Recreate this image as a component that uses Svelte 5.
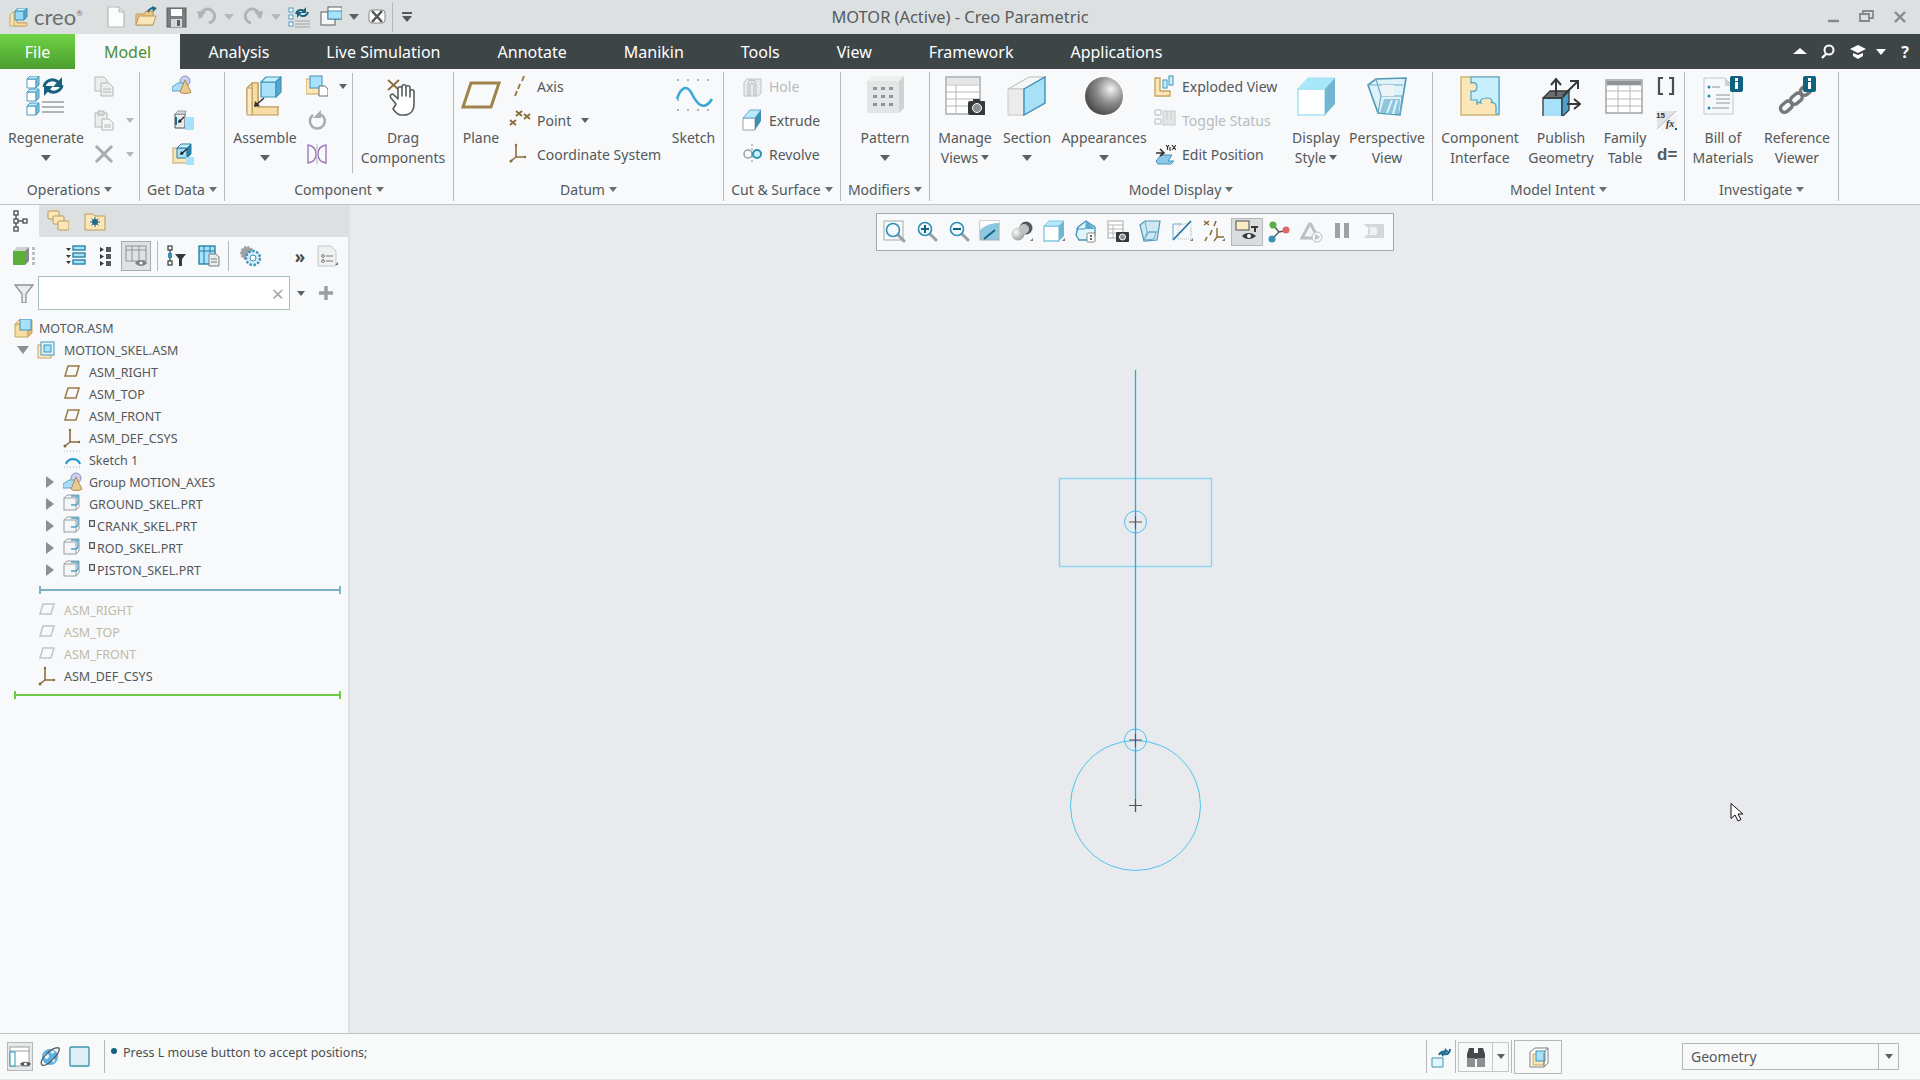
<script>
	// small helpers for the recurring cube shape in the icons
	function cube(x, y, s, f = "#fff", t = "#b8e8fa", r = "#7cc0dc", st = "#4a9cc0", sw = 1) {
		const d = Math.round(s * 0.25);
		const w = s - d;
		const a = `stroke="${st}" stroke-width="${sw}" stroke-linejoin="round"`;
		return `<path d="M${x} ${y + d}h${w}v${w}h${-w}z" fill="${f}" ${a}/><path d="M${x} ${y + d}l${d} ${-d}h${w}l${-d} ${d}z" fill="${t}" ${a}/><path d="M${x + w} ${y + d}l${d} ${-d}v${w}l${-d} ${d}z" fill="${r}" ${a}/>`;
	}
	const badge = (x, y) =>
		`<rect x="${x}" y="${y}" width="13" height="16" rx="2" fill="#10607f"/><rect x="${x + 5}" y="${y + 6}" width="3" height="7" fill="#fff"/><rect x="${x + 5}" y="${y + 2}" width="3" height="3" fill="#fff"/>`;
	const lens = (x, y, inner = "") =>
		`<path d="M${x + 5} ${y + 5}l6 6" stroke="#9aa0a2" stroke-width="3" stroke-linecap="round"/><circle cx="${x}" cy="${y}" r="6.5" fill="#f2fafd" stroke="#2f8fb5" stroke-width="1.6"/>${inner}`;
	const tinyCaret = `<path d="M19 21h3v-3z" fill="#777"/>`;
	const planeS = (c = "#9a7a45") => `<path d="M2 14L5 4h11l-3 10z" fill="none" stroke="${c}" stroke-width="1.5"/>`;
	const csys = `<path d="M7 2v12M7 14h9M7 14l-5 4" stroke="#8a6c3a" stroke-width="1.6" fill="none"/><circle cx="7" cy="2" r="1.2" fill="#8a6c3a"/><circle cx="16" cy="14" r="1.2" fill="#8a6c3a"/><circle cx="2" cy="18" r="1.5" fill="#8a6c3a"/>`;
	const partS = `<rect x="1" y="4" width="12" height="12" fill="#f4f6f7" stroke="#9a9ea0"/><path d="M1 4l3-3h12v12l-3 3M13 4l3-3" fill="none" stroke="#9a9ea0"/><path d="M8 2h7v6a3 3 0 0 1-3 3H8" fill="none" stroke="#45a5d0" stroke-width="1.3"/>`;
	const coneS = `<circle cx="13" cy="6" r="5" fill="#c8cff0" stroke="#8a94c8"/><path d="M0 12l6-4h8l-4 8H0z" fill="#aedcf5" stroke="#5aa5cc"/><path d="M13 5l6 12c-2 2-9 2-11 0z" fill="#e9c98f" stroke="#b08c4c"/>`;

	const icons = {
		// ribbon, large
		regen: `${cube(1, 0, 12)}${cube(1, 13, 12)}${cube(1, 27, 12)}<path d="M18 11a8.5 8.5 0 0 1 14-5" stroke="#17607f" stroke-width="3" fill="none"/><path d="M36 1v10h-9z" fill="#17607f"/><path d="M36 9a8.5 8.5 0 0 1-14 5" stroke="#17607f" stroke-width="3" fill="none"/><path d="M18 20V10h9z" fill="#17607f"/><path d="M16 26h22M16 31h22M16 36h22" stroke="#b0b4b6" stroke-width="2"/>`,
		assemble: `<g transform="translate(-3 0)"><path d="M5 12l5-5h6v24h20l-5 5H5z" fill="#fbe6b8" stroke="#b99a5c" stroke-width="1.2"/><path d="M10 7h6v24h20v8H10z" fill="#f7dca4" stroke="#b99a5c" stroke-width="1.2"/><path d="M5 12h5v27H5z" fill="#fbe9c2" stroke="#b99a5c"/>${cube(19, 1, 20, "#a8e2fa", "#c8f0fc", "#58a8cc", "#3f94b8", 1.2)}<path d="M22 22l-8 7" stroke="#333" stroke-width="1.6"/><path d="M12 31l1-6 5 5z" fill="#333"/></g>`,
		drag: `<path d="M5 4l11 10M16 4L5 14" stroke="#8a6d3b" stroke-width="1.8"/><path d="M13 28l-5-6c-2-3 1-5 3-3l4 4V13c0-3 4-3 4 0v7-9c0-3 4-3 4 0v9-8c0-3 4-3 4 0v9-5c0-3 4-3 4 0v12c0 7-4 11-10 11h-3c-3 0-5-2-8-6z" fill="#fff" stroke="#5a5e60" stroke-width="1.6" stroke-linejoin="round"/>`,
		plane: `<path d="M2 31L10 7h28l-8 24z" fill="none" stroke="#a0844c" stroke-width="3"/>`,
		sketch: `<g fill="#9aa0a2"><circle cx="4" cy="4" r="1"/><circle cx="14" cy="4" r="1"/><circle cx="24" cy="4" r="1"/><circle cx="34" cy="4" r="1"/><circle cx="4" cy="24" r="1"/><circle cx="37" cy="24" r="1"/><circle cx="4" cy="34" r="1"/><circle cx="14" cy="34" r="1"/><circle cx="24" cy="34" r="1"/><circle cx="34" cy="34" r="1"/></g><path d="M3 23C7 11 13 8 18 18s12 18 20 5" fill="none" stroke="#3aa8d8" stroke-width="2.6"/>`,
		pattern: `<g transform="translate(0 -2)"><path d="M2 7l5-5h32v32l-5 5H2z" fill="#e3e5e6"/><path d="M34 7l5-5v32l-5 5z" fill="#cfd2d3"/><path d="M2 7l5-5h32l-5 5z" fill="#eef0f0"/><g fill="#8f9496"><rect x="8" y="13" width="4" height="3"/><rect x="16" y="13" width="4" height="3"/><rect x="24" y="13" width="4" height="3"/><rect x="8" y="21" width="4" height="3"/><rect x="16" y="21" width="4" height="3"/><rect x="24" y="21" width="4" height="3"/><rect x="8" y="29" width="4" height="3"/><rect x="16" y="29" width="4" height="3"/><rect x="24" y="29" width="4" height="3"/></g></g>`,
		manage: `<rect x="1" y="1" width="34" height="37" fill="#fff" stroke="#a4a8aa" stroke-width="1.4"/><path d="M1 9h34M1 16h34M1 23h34M1 30h34M11 9v29" stroke="#b4b8ba"/><path d="M2 2h32v6H2z" fill="#e4e6e7"/><rect x="23" y="25" width="18" height="14" rx="2" fill="#35393b"/><rect x="28" y="23" width="7" height="3" fill="#35393b"/><circle cx="32" cy="32" r="4.5" fill="#8b9092" stroke="#fff"/>`,
		section: `<path d="M1 13L22 1h16L17 13z" fill="#f5f6f6" stroke="#b8bcbe"/><path d="M1 13h16v26H1z" fill="#ececed" stroke="#c4c8ca"/><path d="M17 13L38 1v26L17 39z" fill="#a8e0f8" stroke="#3f8fb4" stroke-width="1.4"/>`,
		sphere: `<defs><radialGradient id="sph" cx="0.68" cy="0.32" r="0.82"><stop offset="0" stop-color="#f4f4f4"/><stop offset="0.45" stop-color="#8c8c8c"/><stop offset="1" stop-color="#3a3a3a"/></radialGradient></defs><circle cx="20" cy="20" r="19" fill="url(#sph)"/>`,
		display: `<path d="M2 13h27v26H2z" fill="#fff" stroke="#a5e0f4" stroke-width="1.5"/><path d="M2 13L12 2h27L29 13z" fill="#a8e8fa" stroke="#a5e0f4"/><path d="M29 13L39 2v26L29 39z" fill="#74b6d2"/>`,
		persp: `<path d="M1 9l8-6 30-1-6 37-22-2z" fill="#dff2f9" stroke="#4f98b8" stroke-width="1.6"/><path d="M9 3l5 17h21M14 20l-3 17M33 39l2-19" fill="none" stroke="#6aabc6" stroke-width="1.2"/><path d="M13 37l4-14h16l-1 15z" fill="#8ec5dc"/><path d="M20 37l5-13M26 38l4-14" stroke="#dff2f9" stroke-width="2"/><path d="M1 9h35" stroke="#6aabc6"/><path d="M15 9h12v11H15z" fill="#eef4f6"/>`,
		iface: `<rect x="1" y="1" width="38" height="38" fill="#fbe6b8" stroke="#c6a561" stroke-width="1.2"/><path d="M11 1h28v37H36V30c0-3-3-4-5-3 2-2 1-5-4-5s-8 2-6 5c-2-1-4-1-4 2v-5h-6v-9c3 1 6 0 6-4s-3-5-6-4z" fill="#c8effc" stroke="#46a5cc" stroke-width="1.2"/>`,
		publish: `${cube(2, 15, 26, "#a8e2fa", "#6a6e70", "#4ea0c8", "#35393b", 1.3)}<path d="M15 20V4M10 9l5-6 5 6M22 20L36 6M29 5h8v8M26 28h12M33 23l6 5-6 5" fill="none" stroke="#35393b" stroke-width="2"/>`,
		family: `<g transform="translate(0 1)"><rect x="1" y="3" width="36" height="33" fill="#fff" stroke="#9ea2a4" stroke-width="1.5"/><path d="M1 8h36M1 14h36M1 22h36M1 29h36M13 8v28M25 8v28" stroke="#b4b8ba"/><path d="M2 4h34v4H2z" fill="#8f9395"/></g>`,
		bom: `<path d="M1 2h21l8 8v28H1z" fill="#f6f9fb" stroke="#c4c8ca"/><path d="M22 2v8h8z" fill="#cbd2d6"/><path d="M9 11h8M13 19h14M13 23h14M9 32h17M13 27h14" stroke="#8f9496"/><circle cx="6" cy="11" r="1.5" fill="#2a86ac"/><circle cx="6" cy="20" r="1.5" fill="#2a86ac"/><circle cx="6" cy="32" r="1.5" fill="#2a86ac"/>${badge(27, 0)}`,
		refview: `<g fill="none" stroke="#75797b" stroke-width="3.4"><rect x="3" y="27" width="13" height="8" rx="4" transform="rotate(-40 9 31)"/><rect x="13" y="19" width="13" height="8" rx="4" transform="rotate(-40 19 23)"/><rect x="23" y="10" width="13" height="8" rx="4" transform="rotate(-40 29 14)"/></g>${badge(26, 0)}`,
		// ribbon, small
		copy: `<g fill="#eceeee" stroke="#b4b8ba"><path d="M2 2h9l3 3v11H2z"/><path d="M8 8h8l4 4v9H8z"/></g><path d="M10 14h8M10 17h8" stroke="#b4b8ba"/>`,
		paste: `<path d="M2 4h12v14H2z" fill="#eceeee" stroke="#b4b8ba"/><path d="M5 2h6v4H5z" fill="#dcdfe0" stroke="#b4b8ba"/><path d="M9 10h7l4 4v7H9z" fill="#f6f7f7" stroke="#b4b8ba"/><path d="M11 16h7M11 18h7" stroke="#b4b8ba"/>`,
		del: `<path d="M3 3l16 16M19 3L3 19" stroke="#a8acae" stroke-width="3"/>`,
		get1: coneS,
		get2: `<path d="M3 5h10v14H3z" fill="#e8eaeb" stroke="#4e5254"/><path d="M3 5l3-3h8l-1 3z" fill="#d8dadb" stroke="#9a9ea0"/><rect x="13" y="8" width="9" height="13" fill="#a8e2fa"/><path d="M12 8l-5 5" stroke="#222" stroke-width="1.3"/><path d="M6 14l1-4 3 3z" fill="#222"/><path d="M3 8h2v8H3z" fill="#1d6a8c"/>`,
		get3: `<rect x="1" y="5" width="14" height="15" fill="#fbe6b8" stroke="#c6a561"/>${cube(5, 1, 14, "#a8e2fa", "#c8f0fc", "#2b7fa4", "#2b7fa4")}<rect x="14" y="14" width="8" height="8" fill="#a8e2fa"/><path d="M15 6l-6 5" stroke="#222" stroke-width="1.3"/><path d="M8 12l1-4 3 3z" fill="#222"/>`,
		comp1: `<rect x="0" y="4" width="15" height="15" fill="#fbe6b8" stroke="#c6a561"/><rect x="4" y="1" width="12" height="12" fill="#a8e2fa" stroke="#3f94b8"/><path d="M13 11h6l3 3v7h-9z" fill="#fff" stroke="#6a6e70"/>`,
		undoCirc: `<path d="M7 6a7.5 7.5 0 1 0 8-.5" fill="none" stroke="#a8acae" stroke-width="2.5"/><path d="M15 1v8h-8z" fill="#a8acae"/>`,
		mirror: `<path d="M2 2c6 1 8 4 8 9s-2 8-8 9zM20 2c-6 1-8 4-8 9s2 8 8 9z" fill="none" stroke="#9a72bc" stroke-width="1.3"/><path d="M11 1v20" stroke="#b8b8b8"/>`,
		axis: `<path d="M15 1l-2 5M11 9l-2 5M8 16l-2 5" stroke="#9a7a45" stroke-width="2"/>`,
		point: `<path d="M7 2l6 5M13 2L7 7M15 5l6 5M21 5l-6 5M1 11l6 5M7 11l-6 5" stroke="#8a6c3a" stroke-width="1.8"/>`,
		csysR: csys,
		hole: `<path d="M3 7l3-3h14v14l-3 3H3z" fill="#e8eaeb" stroke="#c0c4c6"/><path d="M7 21V9a4 4 0 0 1 8 0v12M9 21V10a2 2 0 0 1 4 0v11" fill="none" stroke="#b8bcbe"/>`,
		extrude: `<path d="M2 9h12v12H2z" fill="#fff" stroke="#9ea2a4"/><path d="M2 9l7-8h11l-6 8z" fill="#b8e8fa" stroke="#6aa8c6"/><path d="M14 9l6-8v11l-6 9z" fill="#3f8fb4"/>`,
		revolve: `<path d="M11 1v20" stroke="#8a8e90" stroke-dasharray="2 2"/><circle cx="7" cy="11" r="4" fill="none" stroke="#9aa0a2" stroke-width="1.5"/><circle cx="16" cy="11" r="4" fill="#c8effc" stroke="#2f8fb5" stroke-width="2"/>`,
		exploded: `<path d="M1 3h5v13h10v5H1z" fill="#fbe6b8" stroke="#c6a561" stroke-width="1.4"/><rect x="9" y="5" width="4" height="8" fill="#c8effc" stroke="#3f94b8"/><rect x="15" y="1" width="4" height="9" fill="#c8effc" stroke="#3f94b8"/>`,
		toggle: `<rect x="1" y="1" width="6" height="5" rx="1" fill="none" stroke="#c8cccd" stroke-width="1.4"/><rect x="1" y="10" width="6" height="5" rx="1" fill="none" stroke="#c8cccd" stroke-width="1.4"/><rect x="9" y="2" width="12" height="14" fill="#e2e4e5" stroke="#c8cccd"/><path d="M13 2v9M17 2v9" stroke="#c8cccd"/>`,
		editpos: `<path d="M2 18l5-6h11l-4 6h6l-3 3H4z" fill="#8cc8e8" stroke="#3f94b8"/><path d="M2 10h7M6 6l4 4-4 3" fill="none" stroke="#333" stroke-width="1.6"/><path d="M12 2l1.5 2L15 2M13.5 4v3M16 8v-4M18 2l4 5M22 2l-4 5" stroke="#333" stroke-width="1.2" fill="none"/>`,
		brackets: `<path d="M8 3H4v16h4M14 3h4v16h-4" fill="none" stroke="#4a4e50" stroke-width="2.2"/>`,
		fx: `<path d="M1 2h21L2 20V2z" fill="#e2e4e5"/><path d="M22 4L5 21h17z" fill="#f0f1f2"/><path d="M2 20L21 2" stroke="#b8bcbe"/><text x="1" y="9" font-size="8" font-weight="700" fill="#333" font-family="Liberation Sans">15</text><text x="11" y="18" font-size="10" font-style="italic" font-weight="700" fill="#333" font-family="Liberation Serif">fx</text><rect x="20" y="19" width="2" height="2" fill="#10607f"/>`,
		dEq: `<text x="2" y="17" font-size="17" font-weight="700" fill="#55595b" font-family="Liberation Sans">d=</text>`,
		// graphics toolbar
		refit: `<rect x="1" y="1" width="19" height="19" fill="#f8f9fa" stroke="#a8acae"/>${lens(10, 10)}`,
		zoomIn: `${lens(10, 9, '<path d="M6 9h8M10 5v8" stroke="#17607f" stroke-width="2"/>')}`,
		zoomOut: `${lens(10, 9, '<path d="M6 9h8" stroke="#17607f" stroke-width="2"/>')}`,
		repaint: `<rect x="1" y="1" width="19" height="19" fill="#8cc8e0" stroke="#a8acae"/><path d="M1 10C8 4 14 3 20 3V1H1z" fill="#f4f6f7"/><path d="M2 7c8-4 12-4 18-4v-2H2z" fill="#fff"/><path d="M5 19l11-9" stroke="#16668a" stroke-width="2"/>`,
		appearS: `<defs><radialGradient id="blob" cx="0.35" cy="0.35" r="0.8"><stop offset="0" stop-color="#fafafa"/><stop offset="1" stop-color="#8c9092"/></radialGradient></defs><circle cx="15" cy="8" r="6.5" fill="#55595b"/><circle cx="7" cy="14" r="6.5" fill="url(#blob)"/><circle cx="13" cy="9" r="5" fill="#bfc2c3"/>${tinyCaret}`,
		dispS: `<path d="M1 6h15v15H1z" fill="#fff" stroke="#7cc8e4" stroke-width="1.3"/><path d="M1 6l5-5h15l-5 5z" fill="#b8e8fa" stroke="#7cc8e4"/><path d="M16 6l5-5v15l-5 5z" fill="#74b6d2"/>${tinyCaret}`,
		saved: `<path d="M3 7L11 1l9 6v8l-8 5H4l-3-5z" fill="#e0f4fb" stroke="#3f94b8" stroke-width="1.3"/><path d="M11 1l-1 8h10z" fill="#5aaad0"/><path d="M1 9h9" stroke="#3f94b8"/><rect x="12" y="13" width="8" height="9" rx="1" fill="#fff" stroke="#888"/><rect x="15" y="15" width="2" height="2" fill="#666"/><rect x="15" y="18" width="2" height="2" fill="#666"/>`,
		managS: `<rect x="1" y="1" width="15" height="17" fill="#fff" stroke="#a4a8aa"/><path d="M1 5h15M1 9h15M1 13h15M6 5v13" stroke="#b4b8ba"/><rect x="9" y="12" width="13" height="10" rx="1" fill="#35393b"/><circle cx="15.5" cy="17" r="3" fill="#8b9092" stroke="#fff"/>`,
		perspS: `<path d="M1 5l5-4h15l-3 19-13 1z" fill="#cfe9f4" stroke="#4f98b8" stroke-width="1.2"/><path d="M6 1l2 11h11M8 12l-3 9M5 20l5-8h7l-2 7z" fill="none" stroke="#6aabc6"/>`,
		planeD: `<path d="M7 19V6L20 2v13" fill="none" stroke="#c0c4c6" stroke-dasharray="1 1"/><path d="M7 19h13V8" fill="none" stroke="#c0c4c6" stroke-dasharray="1 1"/><path d="M2 20L20 1" stroke="#2478a0" stroke-width="1.8"/><path d="M2 4h9M2 20V4" stroke="#6aabc6"/>${tinyCaret}`,
		datumD: `<path d="M1 1l5 4M6 1L1 5M13 1l-2 5M9 10l-2 5M4 17l-2 4" stroke="#8a6c3a" stroke-width="1.6"/><path d="M14 8v9h7M14 17l-3 4" stroke="#8a6c3a" stroke-width="1.4" fill="none"/>${tinyCaret}`,
		layer: `<rect x="1" y="1" width="13" height="9" fill="#fbecc8" stroke="#4a4e50"/><path d="M16 6h7v2h-2v4h-2v-4h-3z" fill="#35393b"/><path d="M7 16c3-4 10-4 14 0-4 4-11 4-14 0z" fill="#35393b"/><circle cx="14" cy="16" r="2" fill="#fff"/>`,
		node: `<path d="M7 6l5 6-6 6M12 12l9-2" stroke="#555" stroke-width="1.4" fill="none"/><circle cx="6" cy="5" r="3.5" fill="#5cb048"/><circle cx="19" cy="10" r="3.5" fill="#e0686a"/><circle cx="5" cy="19" r="3.5" fill="#3f8fb4"/>`,
		triPlay: `<path d="M11 3L3 18h14" fill="none" stroke="#bcc0c2" stroke-width="3"/><path d="M11 3l6 11" stroke="#bcc0c2" stroke-width="3"/><path d="M11 8l-3 7h6z" fill="#f0f1f2"/><circle cx="18" cy="17" r="5" fill="#f4f6f7" stroke="#bcc0c2"/><path d="M16 14l5 3-5 3z" fill="#bcc0c2"/>`,
		pause: `<rect x="4" y="3" width="5" height="15" fill="#9ea2a4"/><rect x="13" y="3" width="5" height="15" fill="#9ea2a4"/>`,
		ghost: `<path d="M1 4h20v14H1l4-4V8z" fill="#d4d6d7"/><path d="M6 7h7c2 3 2 5 0 8H6c2-3 2-5 0-8z" fill="#f0f1f2"/>`,
		// quick access
		logo: `<path d="M1 7l3-3h4v11h10l-3 3H1z" fill="#fbe6b8" stroke="#c6a561"/><path d="M5 4h3v11h10v3H5z" fill="#f7dca4" stroke="#c6a561"/>${cube(6, 0, 12, "#94d8f6", "#c8f0fc", "#58a8cc", "#3f94b8")}`,
		fileNew: `<path d="M3 1h11l5 5v15H3z" fill="#fcfdfd" stroke="#b4b8ba" stroke-width="1.2"/><path d="M14 1v5h5" fill="#dfe3e5" stroke="#b4b8ba"/>`,
		open: `<path d="M1 8h8l2-3h7v14H1z" fill="#e9c67f" stroke="#b99a5c"/><path d="M1 19l3-9h17l-3 9z" fill="#fbe6b8" stroke="#b99a5c"/><path d="M13 6c1-3 3-4 6-4" stroke="#1d6a8c" stroke-width="2" fill="none"/><path d="M17 0l5 2-4 4z" fill="#1d6a8c"/>`,
		save: `<rect x="1" y="2" width="19" height="19" fill="#7a7e80" stroke="#5a5e60"/><rect x="5" y="3" width="11" height="7" fill="#fff"/><rect x="5" y="13" width="11" height="8" fill="#d4d6d7"/><rect x="11" y="14" width="3" height="6" fill="#5a5e60"/>`,
		undo: `<path d="M5 13a7 7 0 1 1 8 5" fill="none" stroke="#b0b4b6" stroke-width="3" transform="translate(0 -1)"/><path d="M1 5l9 1-7 7z" fill="#b0b4b6"/>`,
		redo: `<path d="M17 13a7 7 0 1 0-8 5" fill="none" stroke="#b0b4b6" stroke-width="3" transform="translate(0 -1)"/><path d="M21 5l-9 1 7 7z" fill="#b0b4b6"/>`,
		regenS: `<g fill="#fff" stroke="#4a9cc0"><rect x="1" y="2" width="4" height="4"/><rect x="1" y="9" width="4" height="4"/><rect x="1" y="16" width="4" height="4"/></g><path d="M8 8c1-4 5-5 8-3M20 6c-1 4-5 5-8 3" stroke="#17607f" stroke-width="2" fill="none"/><path d="M18 1v6h-5zM9 12V6h5z" fill="#17607f"/><path d="M7 15h15M7 18h15M7 21h15" stroke="#9ea2a4"/>`,
		windows: `<rect x="1" y="6" width="14" height="13" fill="#f6f7f7" stroke="#5a5e60"/><rect x="8" y="1" width="14" height="12" fill="#fff" stroke="#5a5e60"/><rect x="8" y="5" width="14" height="8" fill="#a8e2fa" stroke="#3f94b8"/>`,
		closeW: `<rect x="3" y="4" width="16" height="13" rx="3" fill="#fff" stroke="#888"/><path d="M6 5l10 11M16 5L6 16" stroke="#55595b" stroke-width="2.6"/>`,
		// navigation panel
		treeTab: `<g fill="none" stroke="#55595b" stroke-width="1.4" transform="translate(4 0)"><rect x="1" y="1" width="4" height="4"/><rect x="1" y="9" width="4" height="4"/><rect x="1" y="17" width="4" height="4"/><rect x="10" y="9" width="4" height="4"/><path d="M3 5v4M3 13v4M5 11h5"/></g>`,
		folders: `<g fill="#fbe6b8" stroke="#b99a5c"><rect x="1" y="1" width="11" height="8" rx="1"/><rect x="6" y="6" width="11" height="8" rx="1"/><rect x="11" y="11" width="11" height="9" rx="1"/></g>`,
		favFolder: `<path d="M1 4h8l2 2h10v14H1z" fill="#fbe6b8" stroke="#b99a5c"/><circle cx="11" cy="12" r="3" fill="#1d6a8c"/><path d="M11 7v10M6 12h10M7.5 8.5l7 7M14.5 8.5l-7 7" stroke="#1d6a8c"/>`,
		greenCube: `<path d="M1 6h12v14H1z" fill="#5cb038"/><path d="M1 6l4-4h12l-4 4z" fill="#cfd2d3"/><path d="M13 6l4-4v14l-4 4z" fill="#85898b"/>`,
		dots: `<g fill="#bcc0c2"><rect x="2" y="2" width="3" height="3"/><rect x="2" y="7" width="3" height="3"/><rect x="2" y="12" width="3" height="3"/><rect x="2" y="17" width="3" height="3"/></g>`,
		listExp: `<path d="M1 3h5l-2.5 3zM1 10h5l-2.5 3zM1 16h5l-2.5 3z" fill="#35393b"/><g fill="#a8e2fa" stroke="#1d7aa0" stroke-width="1.3"><rect x="8" y="1" width="12" height="4"/><rect x="8" y="8" width="12" height="4"/><rect x="8" y="15" width="12" height="4"/></g>`,
		listCol: `<g transform="translate(4 0)"><path d="M1 2l4 2.5L1 7zM1 9l4 2.5L1 14zM1 16l4 2.5L1 21z" fill="#35393b"/><g fill="#55595b"><rect x="7" y="2" width="5" height="5"/><rect x="7" y="9" width="5" height="5"/><rect x="7" y="16" width="5" height="5"/></g></g>`,
		cols: `<g fill="#dfe1e2" stroke="#8f9496"><rect x="1" y="1" width="20" height="15"/><path d="M7 1v15M14 1v15M1 5h20" fill="none"/></g><path d="M10 18c3-4 9-4 12 0-3 4-9 4-12 0z" fill="#7e8284"/><circle cx="16" cy="18" r="1.5" fill="#fff"/>`,
		treeFilter: `<g fill="none" stroke="#35393b" stroke-width="1.2"><rect x="1" y="1" width="4" height="4"/><rect x="1" y="16" width="4" height="4"/><path d="M3 5v3M3 13v3"/></g><rect x="1" y="8" width="4" height="5" fill="#3f8fb4"/><path d="M8 9h11l-4 5v7h-3v-7z" fill="#35393b"/>`,
		colsDoc: `<rect x="1" y="1" width="16" height="18" fill="#a8e2fa" stroke="#1d7aa0" stroke-width="1.3"/><path d="M6 1v18M12 1v7M1 6h16" stroke="#1d7aa0"/><path d="M11 9h7l3 3v9H11z" fill="#e8eaeb" stroke="#7a7e80"/><path d="M13 14h6M13 17h6" stroke="#7a7e80"/>`,
		gears: `<circle cx="8" cy="8" r="6" fill="#9ea2a4" stroke="#9ea2a4" stroke-width="2" stroke-dasharray="2 1.5"/><circle cx="14" cy="13" r="7" fill="#d8eefa" stroke="#3f94b8" stroke-width="2.4" stroke-dasharray="2.5 1.5"/><circle cx="14" cy="13" r="3" fill="#fff" stroke="#2f8fb5"/>`,
		doc: `<path d="M2 1h13l5 5v15H2z" fill="#eef0f1" stroke="#c4c8ca"/><circle cx="7" cy="11" r="1.4" fill="none" stroke="#777"/><circle cx="7" cy="16" r="1.4" fill="none" stroke="#777"/><path d="M10 11h7M10 16h7" stroke="#777"/><path d="M19 20l3-3v3z" fill="#777"/>`,
		funnel: `<path d="M1 2h18l-7 9v9H8v-9z" fill="#e8eaeb" stroke="#8f9496" stroke-width="1.3"/>`,
		plus: `<path d="M8 1v14M1 8h14" stroke="#9a9ea0" stroke-width="3.4"/>`,
		// tree
		asmTop: `${cube(1, 1, 17, "#f7dca4", "#fbe6b8", "#e0bd78", "#c6a561")}<rect x="6" y="0" width="11" height="11" fill="#a8e2fa" stroke="#3f94b8"/>`,
		asmSk: `<rect x="1" y="4" width="13" height="13" fill="#fbecc8" stroke="#c6a561"/><rect x="4" y="1" width="13" height="13" fill="#e4f6fc" stroke="#3f94b8"/><rect x="7" y="4" width="7" height="7" fill="#a8e2fa" stroke="#3f94b8"/>`,
		planeT: planeS(),
		planeG: planeS("#c2c5c6"),
		csys,
		sketchT: `<path d="M3 14a7.5 7.5 0 0 1 14 0" fill="none" stroke="#2f9bcd" stroke-width="2.2"/><path d="M1 1h17M1 17h17" stroke="#a8acae" stroke-dasharray="1 2"/>`,
		group: coneS,
		part: partS,
		// status bar
		sbPanels: `<rect x="1" y="1" width="19" height="19" fill="#fff" stroke="#9a9ea0"/><path d="M1 5h19" stroke="#9a9ea0"/><rect x="1" y="6" width="5" height="14" fill="#fff" stroke="#2f8fb5"/><path d="M11 18c2-3 9-3 11 0-2 3-9 3-11 0z" fill="#55595b"/><circle cx="16.5" cy="18" r="1.5" fill="#fff"/>`,
		sbWeb: `<circle cx="11" cy="11" r="8" fill="#5cb0e4"/><path d="M5 9c3-3 6 0 5 2s-3 3-4 1zM13 13c3-1 4 1 2 3-2 1-3-1-2-3zM11 4c3 0 5 1 4 3-2 1-4 0-4-3z" fill="#eaf6fc"/><path d="M3 19C-1 14 14 0 20 2c2 4-12 20-17 17z" fill="none" stroke="#55595b" stroke-width="1.3"/>`,
		sbBox: `<rect x="1" y="1" width="19" height="19" rx="1" fill="#e3edf4" stroke="#3f94b8" stroke-width="1.4"/>`,
		sbSync: `<path d="M2 12h11v9H2z" fill="#e4f6fc" stroke="#3f94b8"/><path d="M9 9c1-3 4-4 7-3M20 3c0 4-3 6-6 5" stroke="#1d6a8c" stroke-width="2" fill="none"/><path d="M15 2l4 4-5 1zM13 11l-3-4 5-1z" fill="#1d6a8c"/>`,
		binoc: `<path d="M2 8l2-6h5v5h4V2h5l2 6v13h-8v-8H10v8H2z" fill="#45494b"/><path d="M2 12h8v9H2zM12 12h8v9h-8z" fill="#8c9092"/>`,
		sbCube: `<path d="M3 6l5-4h13v15l-4 4H3z" fill="#fff" stroke="#7a7e80"/><rect x="6" y="8" width="11" height="11" fill="#fbe6b8" stroke="#c6a561"/><rect x="9" y="5" width="9" height="10" fill="#a8e2fa" stroke="#3f94b8"/><path d="M17 6l4-4M17 21V7" stroke="#7a7e80"/>`,
	};

	const big = (w, label, icon, caret = "") => ({ type: "big", w, label, icon, caret });
	const col = (w, pl, rows) => ({ type: "col", w, pl, rows });
	const r = (icon, text = "", extra = {}) => ({ icon, text, ...extra });

	const groups = [
		{
			name: "Operations",
			w: 140,
			items: [
				big(92, ["Regenerate"], "regen", "below"),
				col(47, 1, [r("copy"), r("paste", "", { drop: true }), r("del", "", { drop: true })]),
			],
		},
		{ name: "Get Data", w: 85, items: [col(84, 32, [r("get1"), r("get2"), r("get3")])] },
		{
			name: "Component",
			w: 229,
			items: [
				big(80, ["Assemble"], "assemble", "below"),
				col(47, 1, [r("comp1", "", { drop: true }), r("undoCirc"), r("mirror")]),
				{ type: "sep" },
				big(100, ["Drag", "Components"], "drag"),
			],
		},
		{
			name: "Datum",
			w: 270,
			items: [
				big(54, ["Plane"], "plane"),
				col(156, 1, [r("axis", "Axis"), r("point", "Point", { drop: true }), r("csysR", "Coordinate System")]),
				big(59, ["Sketch"], "sketch"),
			],
		},
		{
			name: "Cut & Surface",
			w: 117,
			items: [col(116, 17, [r("hole", "Hole", { off: true }), r("extrude", "Extrude"), r("revolve", "Revolve")])],
		},
		{ name: "Modifiers", w: 89, items: [big(88, ["Pattern"], "pattern", "below")] },
		{
			name: "Model Display",
			w: 503,
			items: [
				big(70, ["Manage", "Views"], "manage", "inline"),
				big(54, ["Section"], "section", "below"),
				big(100, ["Appearances"], "sphere", "below"),
				col(129, 0, [r("exploded", "Exploded View"), r("toggle", "Toggle Status", { off: true }), r("editpos", "Edit Position")]),
				big(66, ["Display", "Style"], "display", "inline"),
				big(76, ["Perspective", "View"], "persp"),
			],
		},
		{
			name: "Model Intent",
			w: 252,
			items: [
				big(94, ["Component", "Interface"], "iface"),
				big(68, ["Publish", "Geometry"], "publish"),
				big(60, ["Family", "Table"], "family"),
				col(29, 0, [r("brackets"), r("fx"), r("dEq")]),
			],
		},
		{
			name: "Investigate",
			w: 154,
			items: [big(76, ["Bill of", "Materials"], "bom"), big(72, ["Reference", "Viewer"], "refview")],
		},
	];

	const tabs = ["Analysis", "Live Simulation", "Annotate", "Manikin", "Tools", "View", "Framework", "Applications"];

	const qat = [
		{ w: 30, icon: "fileNew" },
		{ w: 30, icon: "open" },
		{ w: 31, icon: "save" },
		{ w: 30, icon: "undo" },
		{ w: 14, caret: true },
		{ w: 34, icon: "redo" },
		{ w: 12, caret: true },
		{ w: 34, icon: "regenS" },
		{ w: 30, icon: "windows" },
		{ w: 16, caret: true, dark: true },
		{ w: 30, icon: "closeW" },
		{ w: 1, line: true },
		{ w: 28, customize: true },
	];

	const navTools = [
		{ w: 22, icon: "greenCube" },
		{ w: 14, icon: "dots" },
		{ w: 14 },
		{ w: 28, icon: "listExp" },
		{ w: 31, icon: "listCol" },
		{ w: 30, icon: "cols", on: true },
		{ w: 12, line: true },
		{ w: 30, icon: "treeFilter" },
		{ w: 31, icon: "colsDoc" },
		{ w: 9, line: true },
		{ w: 33, icon: "gears" },
		{ w: 22 },
		{ w: 24, more: true },
		{ w: 29, icon: "doc" },
	];

	const viewTools = [
		"refit", "zoomIn", "zoomOut", "repaint", "appearS", "dispS", "saved", "managS",
		"perspS", "planeD", "datumD", "layer", "node", "triPlay", "pause", "ghost",
	];

	const tree = [
		{ icon: "planeT", text: "ASM_RIGHT" },
		{ icon: "planeT", text: "ASM_TOP" },
		{ icon: "planeT", text: "ASM_FRONT" },
		{ icon: "csys", text: "ASM_DEF_CSYS" },
		{ icon: "sketchT", text: "Sketch 1" },
		{ icon: "group", text: "Group MOTION_AXES", exp: true },
		{ icon: "part", text: "GROUND_SKEL.PRT", exp: true },
		{ icon: "part", text: "CRANK_SKEL.PRT", exp: true, snap: true },
		{ icon: "part", text: "ROD_SKEL.PRT", exp: true, snap: true },
		{ icon: "part", text: "PISTON_SKEL.PRT", exp: true, snap: true },
	];
	const insert = [
		{ icon: "planeG", text: "ASM_RIGHT", off: true },
		{ icon: "planeG", text: "ASM_TOP", off: true },
		{ icon: "planeG", text: "ASM_FRONT", off: true },
		{ icon: "csys", text: "ASM_DEF_CSYS" },
	];
</script>

{#snippet ico(name, size)}
	<svg class="ico" width={size} height={size} viewBox="0 0 {size} {size}">{@html icons[name]}</svg>
{/snippet}

<div class="app">
	<header class="titlebar">
		<div class="qat">
			{@render ico("logo", 19)}
			<span class="creo">creo<sup>®</sup></span>
			<div class="qat-tools">
				{#each qat as q}
					<span class="slot" style:width="{q.w}px">
						{#if q.icon}{@render ico(q.icon, 22)}{/if}
						{#if q.caret}<i class="caret" class:pale={!q.dark}></i>{/if}
						{#if q.line}<i class="qat-line"></i>{/if}
						{#if q.customize}<i class="customize"></i>{/if}
					</span>
				{/each}
			</div>
		</div>
		<div class="title">MOTOR (Active) - Creo Parametric</div>
		<div class="winbtns">
			<svg width="33" height="22" viewBox="0 0 33 22"><path d="M11 15h11" stroke="#85898b" stroke-width="2.4" /></svg>
			<svg width="33" height="22" viewBox="0 0 33 22"><path d="M13 8V5h10v7h-4M10 8h9v7h-9z" fill="none" stroke="#85898b" stroke-width="1.8" /></svg>
			<svg width="33" height="22" viewBox="0 0 33 22"><path d="M12 6l10 10M22 6L12 16" stroke="#85898b" stroke-width="2.4" /></svg>
		</div>
	</header>

	<nav class="tabs">
		<button class="tab file">File</button>
		<button class="tab active">Model</button>
		{#each tabs as t}
			<button class="tab">{t}</button>
		{/each}
		<div class="tabs-right">
			<svg width="28" height="22" viewBox="0 0 28 22"><path d="M7 13l7-6 7 6z" fill="#fff" /></svg>
			<svg width="28" height="22" viewBox="0 0 28 22"><circle cx="15" cy="9" r="4.5" fill="none" stroke="#fff" stroke-width="2" /><path d="M12 13l-4 4" stroke="#fff" stroke-width="2.4" /></svg>
			<svg class="cap" width="28" height="22" viewBox="0 0 28 22"><path d="M14 4l8 4-8 4-8-4zM9 12l5 2 5-2v3l-5 3-5-3z" fill="#fff" /></svg>
			<span class="slot w18"><i class="caret white"></i></span>
			<span class="help">?</span>
		</div>
	</nav>

	<section class="ribbon">
		{#each groups as g}
			<div class="group" style:width="{g.w}px">
				<div class="group-body">
					{#each g.items as it}
						{#if it.type === "big"}
							<div class="big" style:width="{it.w}px">
								{@render ico(it.icon, 40)}
								<div class="big-label">
									{#each it.label as line, i}
										<div class="line">
											{line}{#if it.caret === "inline" && i === it.label.length - 1}<i class="caret inline"></i>{/if}
										</div>
									{/each}
									{#if it.caret === "below"}
										<div class="line below"><i class="caret"></i></div>
									{/if}
								</div>
							</div>
						{:else if it.type === "col"}
							<div class="col" style:width="{it.w}px" style:padding-left="{it.pl}px">
								{#each it.rows as row}
									<div class="row" class:off={row.off}>
										{@render ico(row.icon, 22)}
										{#if row.text}<span>{row.text}</span>{/if}
										{#if row.drop}<i class="caret" class:pale={!row.text && row.icon !== "comp1"} class:point={row.text}></i>{/if}
									</div>
								{/each}
							</div>
						{:else}
							<div class="vsep"></div>
						{/if}
					{/each}
				</div>
				<div class="group-name">{g.name}<i class="caret small"></i></div>
			</div>
		{/each}
	</section>

	<div class="workspace">
		<aside class="nav">
			<div class="nav-tabs">
				<span class="nav-tab on">{@render ico("treeTab", 22)}</span>
				<span class="nav-tab">{@render ico("folders", 22)}</span>
				<span class="nav-tab">{@render ico("favFolder", 22)}</span>
			</div>
			<div class="nav-tools">
				{#each navTools as n}
					<span class="slot" class:on={n.on} style:width="{n.w}px">
						{#if n.icon}{@render ico(n.icon, 22)}{/if}
						{#if n.line}<i class="tool-line"></i>{/if}
						{#if n.more}<b class="more">»</b>{/if}
					</span>
				{/each}
			</div>
			<div class="search">
				<span class="funnel">{@render ico("funnel", 20)}</span>
				<div class="search-box"><span class="clear">×</span></div>
				<i class="caret"></i>
				<span class="plus">{@render ico("plus", 16)}</span>
			</div>
			<div class="tree">
				<div class="node lv0">
					<span class="node-ico">{@render ico("asmTop", 19)}</span>MOTOR.ASM
				</div>
				<div class="node lv1">
					<span class="exp"><i class="tri down"></i></span>
					<span class="node-ico">{@render ico("asmSk", 18)}</span>MOTION_SKEL.ASM
				</div>
				{#each tree as n}
					<div class="node lv2">
						<span class="exp">{#if n.exp}<i class="tri"></i>{/if}</span>
						<span class="node-ico">{@render ico(n.icon, 20)}</span>
						{#if n.snap}<i class="snap"></i>{/if}{n.text}
					</div>
				{/each}
				<div class="insert blue"></div>
				{#each insert as n}
					<div class="node lv3" class:off={n.off}>
						<span class="node-ico">{@render ico(n.icon, 20)}</span>{n.text}
					</div>
				{/each}
				<div class="insert green"></div>
			</div>
		</aside>

		<main class="graphics">
			<div class="view-tools">
				{#each viewTools as v}
					<span class="vt" class:on={v === "layer"}>{@render ico(v, 24)}</span>
				{/each}
			</div>
			<svg class="sketch" width="1570" height="828" viewBox="350 205 1570 828">
				<g fill="none" stroke="#4cc4f0">
					<rect x="1059.5" y="478.5" width="152" height="88" stroke="#8cd4f0" stroke-width="1.4" />
					<circle cx="1135.5" cy="522" r="11" />
					<circle cx="1135.5" cy="740" r="11" />
					<circle cx="1135.5" cy="805.5" r="65" />
					<path d="M1135.5 370V812" stroke="#18b0e4" stroke-width="1.3" />
				</g>
				<path d="M1129 522h13M1135.5 516v13M1129 740h13M1135.5 734v13M1129 805.5h13M1135.5 799v13" stroke="#704848" stroke-width="1.1" />
				<path d="M1731 803.5v15l4-3.5 3 6 3-1.5-3-5.5h5z" fill="#fff" stroke="#111" />
			</svg>
		</main>
	</div>

	<footer class="status">
		<span class="sb-btn on">{@render ico("sbPanels", 22)}</span>
		<span class="sb-btn">{@render ico("sbWeb", 22)}</span>
		<span class="sb-btn">{@render ico("sbBox", 22)}</span>
		<i class="sb-line first"></i>
		<div class="msg"><i class="bullet"></i>Press L mouse button to accept positions;</div>
		<div class="sb-right">
			<i class="sb-line"></i>
			<span class="sb-sync">{@render ico("sbSync", 22)}</span>
			<i class="sb-line"></i>
			<div class="finder"><span>{@render ico("binoc", 22)}</span><span class="finder-drop"><i class="caret"></i></span></div>
			<i class="sb-line"></i>
			<div class="cube-btn">{@render ico("sbCube", 22)}</div>
			<div class="select"><span>Geometry</span><span class="select-drop"><i class="caret"></i></span></div>
		</div>
	</footer>
</div>

<style>
	:global(body) {
		margin: 0;
		background: #f7f9fb;
	}

	.app {
		width: 1920px;
		height: 1080px;
		display: flex;
		flex-direction: column;
		overflow: hidden;
		font-family: "Noto Sans", "Open Sans", sans-serif;
		font-size: 14px;
		color: #53585a;
	}

	.ico {
		display: block;
		flex: none;
	}

	.slot {
		display: flex;
		align-items: center;
		justify-content: center;
		flex: none;
		height: 100%;
	}

	.caret {
		display: inline-block;
		width: 0;
		height: 0;
		border-left: 5px solid transparent;
		border-right: 5px solid transparent;
		border-top: 6px solid #5c6163;
		flex: none;
	}
	.caret.pale {
		border-top-color: #b4b8ba;
	}
	.caret.white {
		border-top-color: #fff;
	}
	.caret.small {
		border-left-width: 4px;
		border-right-width: 4px;
		border-top-width: 5px;
		margin-left: 4px;
		vertical-align: 3px;
		border-top-color: #6a6f71;
	}
	.caret.inline {
		border-left-width: 4px;
		border-right-width: 4px;
		border-top-width: 5px;
		margin-left: 3px;
		vertical-align: 3px;
	}

	/* title bar */
	.titlebar {
		height: 34px;
		flex: none;
		background: #dce0e0;
		display: grid;
		grid-template-columns: 1fr auto 1fr;
		align-items: center;
	}
	.qat {
		display: flex;
		align-items: center;
		height: 34px;
		padding-left: 9px;
	}
	.creo {
		margin-left: 6px;
		width: 67px;
		font-family: Lato, sans-serif;
		font-size: 22px;
		line-height: 34px;
		color: #6a6f71;
	}
	.creo sup {
		font-size: 8px;
		vertical-align: 9px;
		line-height: 0;
	}
	.qat-tools {
		display: flex;
		height: 34px;
	}
	.qat-line {
		display: block;
		width: 1px;
		height: 30px;
		background: #b4b8ba;
	}
	.customize {
		display: block;
		width: 10px;
		height: 8px;
		border-top: 2px solid #55595b;
		position: relative;
	}
	.customize::after {
		content: "";
		position: absolute;
		top: 2px;
		left: 0;
		border-left: 5px solid transparent;
		border-right: 5px solid transparent;
		border-top: 6px solid #55595b;
	}
	.title {
		font-size: 16.4px;
		color: #565b5d;
		line-height: 34px;
		white-space: nowrap;
	}
	.winbtns {
		display: flex;
		justify-content: flex-end;
		padding-right: 4px;
	}

	/* tabs */
	.tabs {
		height: 35px;
		flex: none;
		background: #3d4547;
		display: flex;
	}
	.tab {
		border: 0;
		background: none;
		padding: 1px 28.5px 0;
		font: inherit;
		font-size: 16px;
		color: #fff;
		line-height: 34px;
	}
	.tab.file {
		width: 75px;
		padding: 1px 0 0;
		background: linear-gradient(#6fd444, #4b9d2f);
	}
	.tab.active {
		width: 105px;
		padding: 1px 0 0;
		background: #f7f9fb;
		color: #4b8f34;
	}
	.tabs-right {
		margin-left: auto;
		display: flex;
		align-items: center;
		padding-right: 2px;
	}
	.cap {
		margin-left: 2px;
	}
	.w18 {
		width: 18px;
	}
	.help {
		width: 26px;
		text-align: center;
		font-weight: 700;
		color: #fff;
		font-size: 16px;
		margin-left: 2px;
	}

	/* ribbon */
	.ribbon {
		height: 136px;
		flex: none;
		box-sizing: border-box;
		background: #f7f9fb;
		border-bottom: 1px solid #bfc3c4;
		display: flex;
		padding-top: 3px;
	}
	.group {
		height: 129px;
		box-sizing: border-box;
		border-right: 1px solid #b4b9ba;
		display: flex;
		flex-direction: column;
		flex: none;
	}
	.group-body {
		flex: 1;
		display: flex;
		padding-top: 4px;
		min-height: 0;
	}
	.group-name {
		height: 20px;
		line-height: 20px;
		text-align: center;
		margin-bottom: 1px;
		white-space: nowrap;
	}
	.big {
		display: flex;
		flex-direction: column;
		align-items: center;
		flex: none;
	}
	.big-label {
		margin-top: 12px;
		text-align: center;
		white-space: nowrap;
	}
	.line {
		height: 20px;
		line-height: 20px;
	}
	.line.below {
		margin-top: -2px;
	}
	.col {
		box-sizing: border-box;
		flex: none;
		margin-top: -7px;
	}
	.row {
		height: 34px;
		display: flex;
		align-items: center;
		gap: 6px;
		white-space: nowrap;
	}
	.row.off {
		color: #b8bcbe;
	}
	.row .caret {
		margin-left: 5px;
		border-left-width: 4px;
		border-right-width: 4px;
		border-top-width: 5px;
	}
	.row .caret.point {
		margin-left: 4px;
	}
	.vsep {
		width: 1px;
		height: 100px;
		margin-top: -3px;
		background: #b4b9ba;
		flex: none;
	}

	/* workspace */
	.workspace {
		flex: 1;
		display: flex;
		min-height: 0;
	}
	.nav {
		width: 348px;
		flex: none;
		background: #f7f9fb;
		border-right: 2px solid #dfe2e5;
	}
	.nav-tabs {
		height: 32px;
		display: flex;
		background: #dce0e0;
	}
	.nav-tab {
		width: 37px;
		display: flex;
		align-items: center;
		justify-content: center;
	}
	.nav-tab.on {
		width: 39px;
		background: #f7f9fb;
	}
	.nav-tools {
		height: 38px;
		display: flex;
		padding-left: 12px;
		align-items: center;
	}
	.nav-tools .slot {
		height: 30px;
	}
	.nav-tools .slot.on {
		box-sizing: border-box;
		background: #dfe1e2;
		border: 1px solid #a8acae;
	}
	.tool-line {
		display: block;
		width: 1px;
		height: 30px;
		background: #b4b8ba;
	}
	.more {
		color: #45494b;
		font-size: 17px;
		line-height: 1;
	}
	.search {
		height: 34px;
		margin-top: 1px;
		display: flex;
		align-items: center;
	}
	.funnel {
		width: 38px;
		padding-left: 14px;
		box-sizing: border-box;
	}
	.search-box {
		width: 252px;
		height: 34px;
		box-sizing: border-box;
		border: 1px solid #a9bcc0;
		background: #fff;
		display: flex;
		align-items: center;
		justify-content: flex-end;
		padding-right: 5px;
	}
	.clear {
		color: #a8acae;
		font-size: 22px;
		line-height: 1;
	}
	.search .caret {
		margin-left: 7px;
		border-left-width: 4px;
		border-right-width: 4px;
		border-top-width: 5px;
	}
	.plus {
		margin-left: 13px;
	}
	.tree {
		padding-top: 7px;
		font-size: 12.5px;
	}
	.node {
		height: 22px;
		display: flex;
		align-items: center;
		white-space: nowrap;
	}
	.node.off {
		color: #c0b9a8;
	}
	.lv0 {
		padding-left: 14px;
	}
	.lv0 .node-ico {
		width: 25px;
	}
	.lv1 {
		padding-left: 17px;
	}
	.lv1 .exp {
		width: 20px;
	}
	.lv1 .node-ico {
		width: 27px;
	}
	.lv2 {
		padding-left: 46px;
	}
	.lv2 .exp {
		width: 17px;
	}
	.lv2 .node-ico {
		width: 26px;
	}
	.lv3 {
		padding-left: 38px;
	}
	.lv3 .node-ico {
		width: 26px;
	}
	.node-ico {
		flex: none;
	}
	.exp {
		flex: none;
		display: flex;
		align-items: center;
	}
	.tri {
		display: block;
		width: 0;
		height: 0;
		border-top: 6px solid transparent;
		border-bottom: 6px solid transparent;
		border-left: 8px solid #8a8f91;
	}
	.tri.down {
		border-top: 8px solid #8a8f91;
		border-bottom: 0;
		border-left: 6px solid transparent;
		border-right: 6px solid transparent;
	}
	.snap {
		width: 4px;
		height: 5px;
		border: 1px solid #55595b;
		background: #fff;
		margin: -6px 2px 0 0;
		flex: none;
		box-shadow: inset 0 0 0 1px #bbb;
	}
	.insert {
		height: 2px;
		position: relative;
	}
	.insert::before,
	.insert::after {
		content: "";
		position: absolute;
		top: -3px;
		width: 2px;
		height: 8px;
		background: inherit;
	}
	.insert::before {
		left: 0;
	}
	.insert::after {
		right: 0;
	}
	.insert.blue {
		margin: 8px 7px 8px 39px;
		background: #7ab2ca;
	}
	.insert.green {
		margin: 7px 7px 0 14px;
		background: #6ccc48;
	}

	.graphics {
		flex: 1;
		background: #e8eaee;
		position: relative;
		display: flex;
		flex-direction: column;
		align-items: center;
		padding-top: 8px;
		min-width: 0;
	}
	.view-tools {
		position: relative;
		z-index: 1;
		height: 38px;
		width: 518px;
		box-sizing: border-box;
		display: flex;
		align-items: center;
		padding-left: 2px;
		background: #f7f9fb;
		border: 1px solid #a4a8aa;
	}
	.vt {
		width: 32px;
		height: 28px;
		flex: none;
		display: flex;
		align-items: center;
		justify-content: center;
		box-sizing: border-box;
	}
	.vt.on {
		background: #dadcde;
		border: 1px solid #b4b8ba;
	}
	.sketch {
		position: absolute;
		left: 0;
		top: 0;
	}

	/* status bar */
	.status {
		height: 47px;
		flex: none;
		box-sizing: border-box;
		background: #f8fafa;
		border-top: 1px solid #bfc5c5;
		border-bottom: 1px solid #e6e8e8;
		display: flex;
		align-items: center;
		padding-left: 7px;
	}
	.sb-btn {
		width: 26px;
		height: 29px;
		margin-right: 4px;
		display: flex;
		align-items: center;
		justify-content: center;
		box-sizing: border-box;
		flex: none;
	}
	.sb-btn.on {
		background: #e6e8e9;
		border: 1px solid #b4b8ba;
	}
	.sb-line {
		display: block;
		width: 1px;
		height: 33px;
		background: #b4b8ba;
		flex: none;
	}
	.sb-line.first {
		margin-left: 7px;
	}
	.msg {
		margin-left: 6px;
		margin-top: -8px;
		font-size: 12.5px;
		line-height: 20px;
		display: flex;
		align-items: center;
		color: #4a4f51;
	}
	.bullet {
		width: 6px;
		height: 6px;
		border-radius: 50%;
		background: #15607f;
		margin: -3px 6px 0 0;
	}
	.sb-right {
		margin-left: auto;
		display: flex;
		align-items: center;
		padding-right: 21px;
	}
	.sb-sync {
		width: 28px;
		display: flex;
		justify-content: center;
	}
	.finder {
		display: flex;
		width: 51px;
		height: 30px;
		margin: 0 2px;
		box-sizing: border-box;
		border: 1px solid #c4c8ca;
		align-items: center;
		justify-content: flex-start;
	}
	.finder > span:first-child {
		width: 33px;
		display: flex;
		justify-content: center;
	}
	.finder-drop {
		flex: 1;
		height: 100%;
		border-left: 1px solid #c4c8ca;
		display: flex;
		align-items: center;
		justify-content: center;
	}
	.finder-drop .caret,
	.select-drop .caret {
		border-left-width: 4px;
		border-right-width: 4px;
		border-top-width: 5px;
	}
	.cube-btn {
		width: 48px;
		height: 34px;
		margin-left: 2px;
		box-sizing: border-box;
		border: 1px solid #b4b8ba;
		display: flex;
		align-items: center;
		justify-content: center;
	}
	.select {
		width: 217px;
		height: 27px;
		margin-left: 120px;
		box-sizing: border-box;
		border: 1px solid #b4b8ba;
		display: flex;
		align-items: center;
		padding-left: 8px;
	}
	.select > span:first-child {
		flex: 1;
	}
	.select-drop {
		width: 19px;
		height: 100%;
		border-left: 1px solid #b4b8ba;
		display: flex;
		align-items: center;
		justify-content: center;
	}
</style>
